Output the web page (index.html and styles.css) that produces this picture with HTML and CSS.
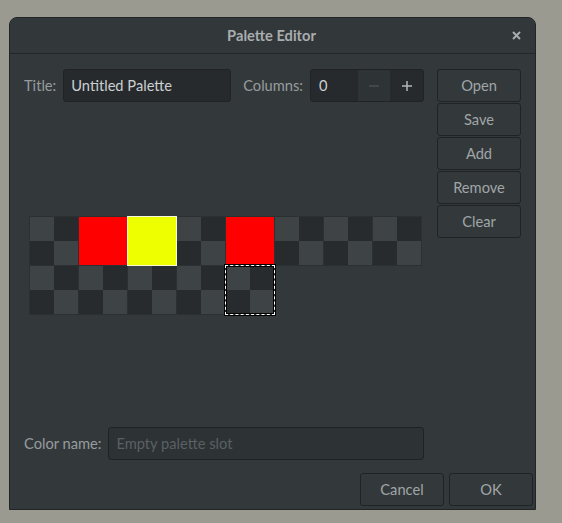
FILE: index.html
```html
<!DOCTYPE html>
<html>
<head>
<meta charset="utf-8">
<link rel="stylesheet" href="styles.css">
</head>
<body>
<div class="window">
  <div class="titlebar">
    <span></span>
    <span class="title">Palette Editor</span>
    <span class="close"><svg width="9" height="9" viewBox="0 0 9 9"><path d="M1 1L8 8M8 1L1 8" stroke="#a7acae" stroke-width="2" stroke-linecap="butt"/></svg></span>
  </div>
  <div class="main">
    <div class="left">
      <div class="row">
        <span class="lbl">Title:</span>
        <div class="entry title-entry">Untitled Palette</div>
        <span class="lbl cols-lbl">Columns:</span>
        <div class="spin">
          <span class="spin-val">0</span>
          <span class="spin-btn minus"><svg width="10" height="10" viewBox="0 0 10 10"><rect x="0" y="4.25" width="10" height="1.5" fill="#485053"/></svg></span>
          <span class="spin-btn plus"><svg width="10" height="10" viewBox="0 0 10 10"><rect x="0" y="4.25" width="10" height="1.5" fill="#b3b7b9"/><rect x="4.25" y="0" width="1.5" height="10" fill="#b3b7b9"/></svg></span>
        </div>
      </div>
      <div class="palette-area">
        <div class="palette">
          <div class="cell check"></div>
          <div class="cell red"></div>
          <div class="cell yellow"></div>
          <div class="cell check"></div>
          <div class="cell red"></div>
          <div class="cell check"></div>
          <div class="cell check"></div>
          <div class="cell check"></div>
          <div class="cell check"></div>
          <div class="cell check"></div>
          <div class="cell check"></div>
          <div class="cell check"></div>
          <div class="cell check selected"></div>
        </div>
      </div>
      <div class="row">
        <span class="lbl">Color name:</span>
        <div class="entry name-entry">Empty palette slot</div>
      </div>
    </div>
    <div class="side">
      <div class="btn">Open</div>
      <div class="btn">Save</div>
      <div class="btn">Add</div>
      <div class="btn">Remove</div>
      <div class="btn">Clear</div>
    </div>
  </div>
  <div class="actions">
    <div class="btn">Cancel</div>
    <div class="btn">OK</div>
  </div>
</div>
</body>
</html>
```
FILE: styles.css
```css
html, body {
  margin: 0;
  padding: 0;
}
body {
  background: #9a9a90;
  font-family: Lato, "Liberation Sans", sans-serif;
  font-size: 14.67px;
  padding: 17px 0 0 9px;
  width: 562px;
  height: 523px;
  box-sizing: border-box;
  overflow: hidden;
}
.window {
  width: 527px;
  height: 493px;
  box-sizing: border-box;
  border: 1px solid #212527;
  border-radius: 8px 8px 0 0;
  background: #33393b;
  display: flex;
  flex-direction: column;
  overflow: hidden;
}
.titlebar {
  height: 36px;
  box-sizing: border-box;
  border-bottom: 1px solid #222628;
  background: #32373a;
  display: grid;
  grid-template-columns: 1fr auto 1fr;
  align-items: center;
  padding: 0 14px 0 14px;
}
.title {
  color: #a9adaf;
  font-weight: bold;
  font-size: 14.67px;
  margin-left: -2px;
}
.close {
  justify-self: end;
  display: flex;
  align-items: center;
}
.main {
  flex: 1;
  display: flex;
  padding: 15px 14px 0 14px;
  gap: 13px;
  min-height: 0;
}
.left {
  flex: 1;
  display: flex;
  flex-direction: column;
}
.row {
  display: flex;
  align-items: center;
  height: 33px;
}
.lbl {
  color: #979c9e;
  margin-right: 7px;
  white-space: nowrap;
}
.cols-lbl {
  margin-left: 12px;
}
.entry {
  height: 33px;
  box-sizing: border-box;
  border: 1px solid #1f2325;
  border-radius: 3px;
  background: #262a2d;
  color: #cdd0d1;
  display: flex;
  align-items: center;
  padding: 0 7px;
  white-space: nowrap;
}
.title-entry {
  flex: 1;
}
.name-entry {
  flex: 1;
  background: #2d3235;
  color: #5a6063;
}
.spin {
  width: 114px;
  height: 33px;
  box-sizing: border-box;
  border: 1px solid #1f2325;
  border-radius: 3px;
  background: #262a2d;
  display: flex;
  overflow: hidden;
}
.spin-val {
  width: 47px;
  color: #cdd0d1;
  padding-left: 8px;
  box-sizing: border-box;
  display: flex;
  align-items: center;
}
.spin-btn {
  display: flex;
  align-items: center;
  justify-content: center;
}
.minus {
  width: 32px;
  background: #2e3336;
}
.plus {
  flex: 1;
}
.palette-area {
  flex: 1;
  display: flex;
  align-items: center;
  justify-content: center;
}
.palette {
  display: grid;
  grid-template-columns: repeat(8, 49px);
  grid-auto-rows: 49px;
  width: 393px;
  padding-left: 1px;
  box-sizing: border-box;
}
.cell {
  width: 50px;
  height: 50px;
  box-sizing: border-box;
  border: 1px solid #2b3032;
  margin: 0 -1px -1px 0;
  position: relative;
}
.check {
  background: conic-gradient(#272b2d 0 25%, #3e4446 0 50%, #272b2d 0 75%, #3e4446 0);
}
.red {
  background: #ff0000;
}
.yellow {
  background: #eeff00;
  border-color: #f6f8d8;
  z-index: 1;
}
.selected::after {
  content: "";
  position: absolute;
  inset: -1px;
  border: 1px dashed #ffffff;
  box-shadow: 0 0 0 1px #000, inset 0 0 0 1px #000;
  z-index: 2;
}
.side {
  width: 84px;
  display: flex;
  flex-direction: column;
  gap: 1px;
}
.btn {
  height: 33px;
  box-sizing: border-box;
  border: 1px solid #1f2325;
  border-radius: 3px;
  background: #33393b;
  color: #a0a5a7;
  display: flex;
  align-items: center;
  justify-content: center;
}
.actions {
  display: flex;
  justify-content: flex-end;
  gap: 5px;
  padding: 13px 2px 3px 0;
}
.actions .btn {
  width: 84px;
}
```
